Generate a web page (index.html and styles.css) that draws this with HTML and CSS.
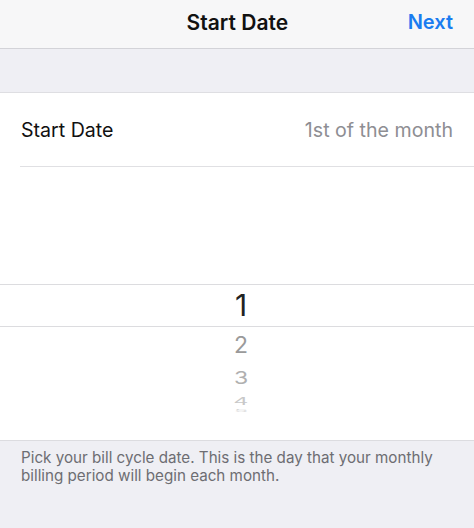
FILE: index.html
```html
<!DOCTYPE html>
<html lang="en">

<head>
    <meta charset="UTF-8">
    <meta name="viewport" content="width=device-width, initial-scale=1.0">
    <title>Start Date</title>
    <link rel="stylesheet" href="styles.css">
</head>

<body>

    <header class="navbar">
        <span class="nav-side"></span>
        <h1 class="nav-title">Start Date</h1>
        <a class="nav-next" href="#">Next</a>
    </header>

    <div class="band"></div>

    <div class="cell">
        <span class="cell-label">Start Date</span>
        <span class="cell-value">1st of the month</span>
    </div>

    <div class="picker">
        <div class="picker-selected">1</div>
        <div class="picker-item item-2">2</div>
        <div class="picker-item item-3">3</div>
        <div class="picker-item item-4">4</div>
        <div class="picker-item item-5">5</div>
    </div>

    <footer class="hint">
        Pick your bill cycle date. This is the day that your monthly
        billing period will begin each month.
    </footer>

</body>

</html>
```

FILE: styles.css
```css
body {
    font-family: Inter, "Liberation Sans", sans-serif;
    margin: 0;
    padding: 0;
    background-color: #efeff4;
    height: 528px;
    overflow: hidden;
}

.navbar {
    height: 48px;
    background-color: #f7f7f8;
    border-bottom: 1px solid #d3d3d8;
    display: flex;
    align-items: center;
    justify-content: space-between;
    padding: 0 21px 4px;
    box-sizing: border-box;
    height: 49px;
}

.nav-side {
    width: 46px;
}

.nav-title {
    margin: 0;
    font-size: 21px;
    font-weight: 600;
    color: #111;
}

.nav-next {
    font-size: 20px;
    font-weight: 600;
    color: #1a7cf0;
    text-decoration: none;
}

.band {
    height: 43px;
    border-bottom: 1px solid #dedee2;
}

.cell {
    background-color: white;
    height: 74px;
    display: flex;
    align-items: center;
    justify-content: space-between;
    padding: 0 21px;
    font-size: 19.6px;
    position: relative;
}

.cell::after {
    content: "";
    position: absolute;
    left: 20px;
    right: 0;
    bottom: 0;
    height: 1px;
    background-color: #e0e0e3;
}

.cell-label {
    color: #111;
}

.cell-value {
    color: #8e8e93;
}

.picker {
    background-color: white;
    height: 273px;
    display: flex;
    flex-direction: column;
    align-items: center;
    padding-top: 117px;
    box-sizing: border-box;
}

.picker-selected {
    width: 100%;
    height: 43px;
    border-top: 1px solid #dcdcdf;
    border-bottom: 1px solid #dcdcdf;
    display: flex;
    align-items: center;
    justify-content: center;
    font-size: 30px;
    color: #222;
    padding-left: 8px;
    padding-bottom: 2px;
    box-sizing: border-box;
}

.picker-item {
    font-size: 23px;
    line-height: 1;
    padding-left: 8px;
}

.item-2 {
    margin-top: 7px;
    color: #9a9a9a;
}

.item-3 {
    margin-top: 10px;
    color: #b0b0b0;
    transform: scaleY(0.75);
}

.item-4 {
    margin-top: 0;
    color: #c8c8c8;
    transform: scaleY(0.45);
}

.item-5 {
    margin-top: -14px;
    color: #d8d8d8;
    transform: scaleY(0.15);
}

.hint {
    border-top: 1px solid #dcdce0;
    padding: 8px 21px;
    font-size: 15.2px;
    line-height: 18px;
    color: #6d6d72;
}
```
